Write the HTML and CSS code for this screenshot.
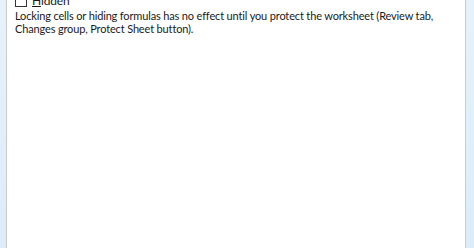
FILE: index.html
```html
<!DOCTYPE html>
<html>
<head>
<meta charset="utf-8">
<link rel="stylesheet" href="styles.css">
</head>
<body>
<div class="frame">
  <div class="side side-left"></div>
  <div class="panel">
    <label class="check">
      <span class="box"></span>
      <span class="label"><u>H</u>idden</span>
    </label>
    <p class="note">Locking cells or hiding formulas has no effect until you protect the worksheet (Review tab, Changes group, Protect Sheet button).</p>
  </div>
  <div class="side side-right"></div>
</div>
</body>
</html>
```
FILE: styles.css
```css
html, body {
  margin: 0;
  padding: 0;
  width: 474px;
  height: 248px;
  overflow: hidden;
  background: #ffffff;
}
.frame {
  display: flex;
  height: 248px;
}
.side {
  background: linear-gradient(180deg, #e6f2fb 0%, #dcecf8 100%);
}
.side-left {
  width: 6px;
  border-right: 1px solid #c9ccd0;
}
.side-right {
  width: 8px;
  border-left: 1px solid #c9ccd0;
}
.panel {
  flex: 1;
  background: #ffffff;
  padding: 0 0 0 8px;
  font-family: "Lato", "Open Sans", sans-serif;
  font-size: 11px;
  letter-spacing: -0.15px;
  color: #1a1a1a;
}
.check {
  display: flex;
  align-items: center;
  gap: 5px;
  height: 8px;
  margin-top: -3px;
  overflow: visible;
}
.box {
  width: 10px;
  height: 10px;
  border: 1px solid #333333;
  background: #ffffff;
  flex: none;
}
.label {
  font-size: 12px;
  line-height: 12px;
}
.note {
  margin: 4px 0 0 0;
  line-height: 13px;
  width: 440px;
}
```
